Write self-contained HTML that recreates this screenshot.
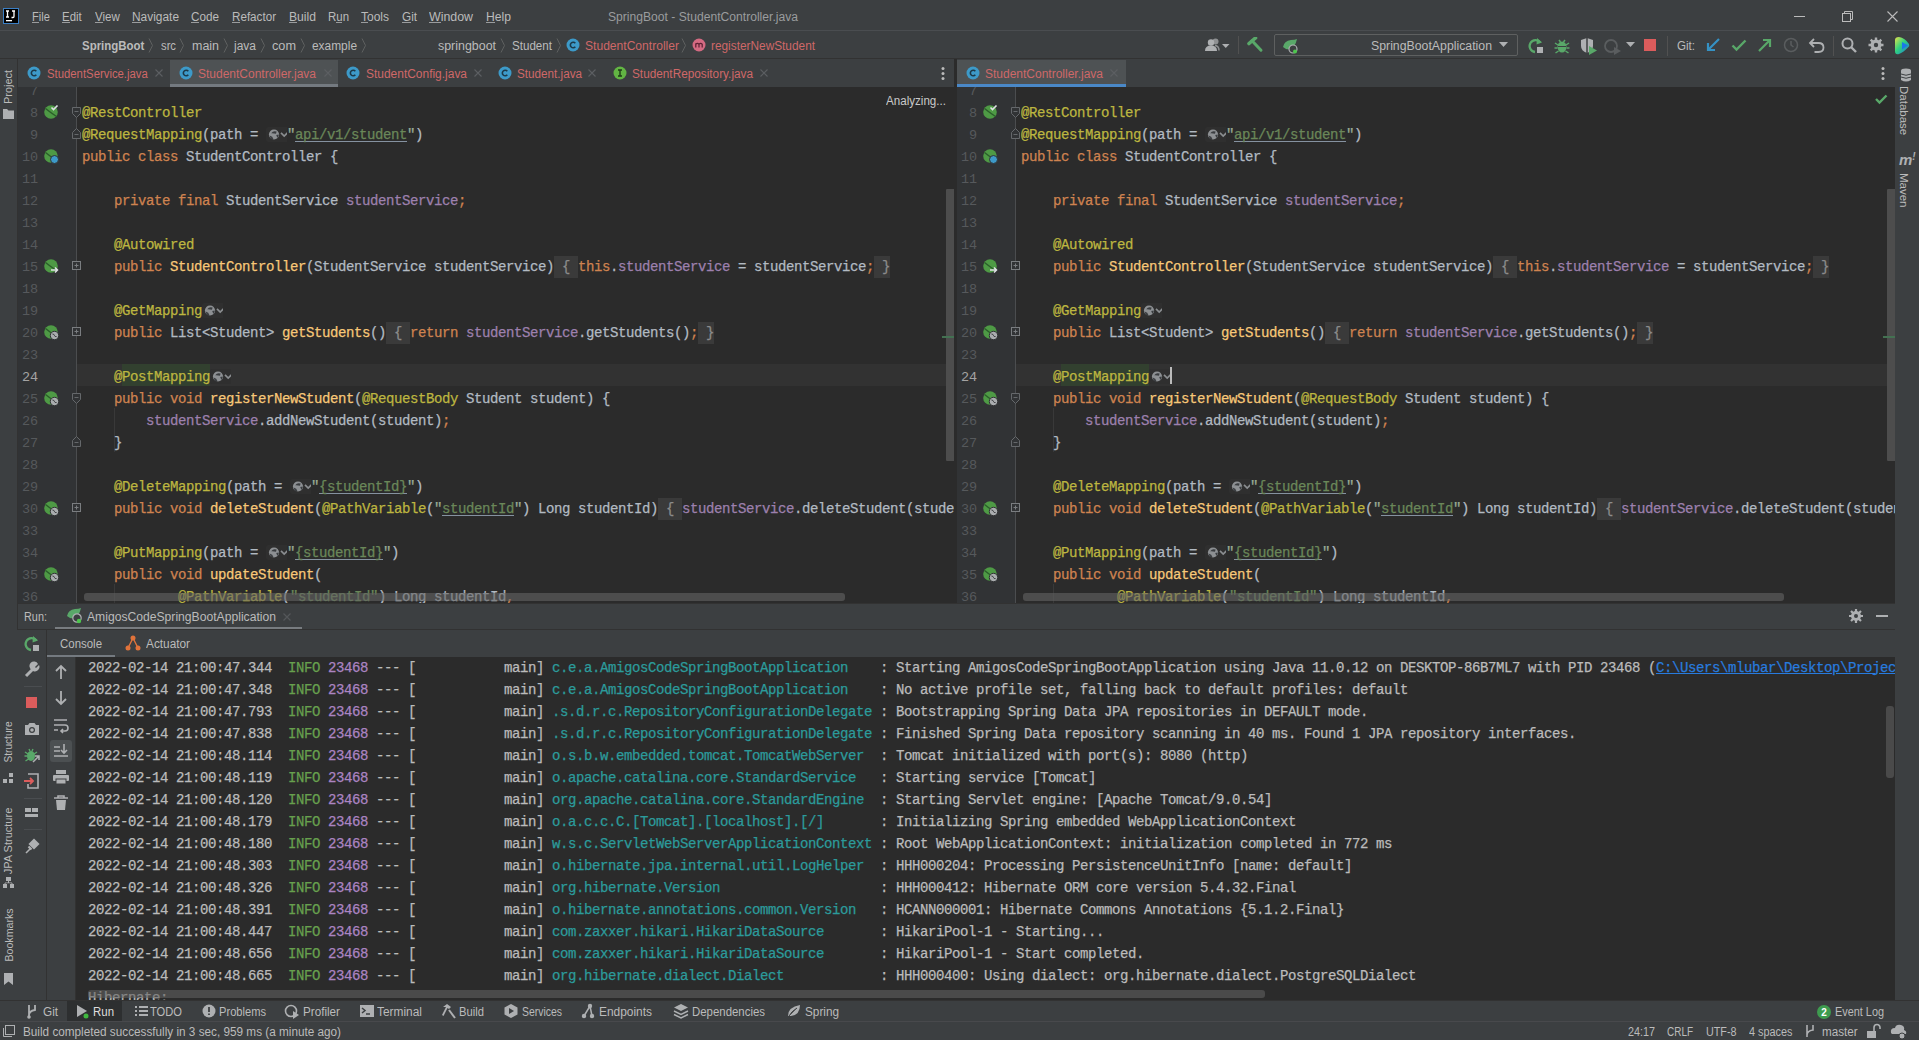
<!DOCTYPE html><html><head><meta charset="utf-8"><style>
*{margin:0;padding:0}
html,body{width:1919px;height:1040px;overflow:hidden;background:#3c3f41}
body{position:relative;font-family:"Liberation Sans",sans-serif}
.r{position:absolute;display:block}
.t{position:absolute;white-space:pre;line-height:20px;height:20px}
.ln{position:absolute;text-align:right;font-family:"Liberation Mono",monospace;font-size:13.5px;line-height:22px;height:22px;letter-spacing:-0.1px}
.cl{position:absolute;white-space:pre;overflow:hidden;font-family:"Liberation Mono",monospace;font-size:14px;letter-spacing:-0.4014px;line-height:22px;height:22px;color:#b2bac2;-webkit-text-stroke:0.25px currentColor}
.cl span{display:inline-block;height:22px;vertical-align:top}
.d{color:#b2bac2} .k{color:#cf8350} .a{color:#bdb640} .s{color:#6a8759} .q{color:#9aab94} .f{color:#9d80ae} .m{color:#f8c878}
.su{color:#6a8759;text-decoration:underline;text-decoration-color:#8592a0;text-underline-offset:2px;text-decoration-skip-ink:none}
.pm{color:#bdb640} .pmh{color:#bdb640}
.fd{background:#3a3a3a;color:#8c8c8c}
.gl{width:21px;letter-spacing:0}
.cd{color:#bbbbbb} .ci{color:#67a04e} .cp{color:#ab84c2} .cg{color:#2b9b9b} .ck{color:#287bde;text-decoration:underline}
</style></head><body><div class="r" style="left:0px;top:0px;width:1919px;height:30px;background:#3c3f41;"></div>
<div class="r" style="left:0px;top:30px;width:1919px;height:1px;background:#4a4d50;"></div>
<svg class="r" style="left:3px;top:8px;" width="16" height="16" viewBox="0 0 16 16"><rect x="0.5" y="0.5" width="15" height="15" fill="#000" stroke="#3b7fc4" stroke-width="1"/><path d="M3 3h3M4.5 3v6M3 9h3M9 3h3M11 3v5.5q0 1-1 1H8.5" stroke="#fff" stroke-width="1.3" fill="none"/><rect x="3" y="12" width="6" height="1.3" fill="#fff"/></svg>
<div class="t" style="left:31.5px;top:6.7px;font-size:12.00px;color:#bbbbbb;transform-origin:0 50%;transform:scaleX(0.9206);">File</div>
<div class="r" style="left:32px;top:22px;width:7px;height:1px;background:#9a9c9e;"></div>
<div class="t" style="left:62.3px;top:6.7px;font-size:12.00px;color:#bbbbbb;transform-origin:0 50%;transform:scaleX(0.9527);">Edit</div>
<div class="r" style="left:62px;top:22px;width:8px;height:1px;background:#9a9c9e;"></div>
<div class="t" style="left:95.2px;top:6.7px;font-size:12.00px;color:#bbbbbb;transform-origin:0 50%;transform:scaleX(0.9615);">View</div>
<div class="r" style="left:95px;top:22px;width:8px;height:1px;background:#9a9c9e;"></div>
<div class="t" style="left:132.2px;top:6.7px;font-size:12.00px;color:#bbbbbb;transform-origin:0 50%;transform:scaleX(0.9924);">Navigate</div>
<div class="r" style="left:132px;top:22px;width:9px;height:1px;background:#9a9c9e;"></div>
<div class="t" style="left:191.0px;top:6.7px;font-size:12.00px;color:#bbbbbb;transform-origin:0 50%;transform:scaleX(0.9761);">Code</div>
<div class="r" style="left:191px;top:22px;width:8px;height:1px;background:#9a9c9e;"></div>
<div class="t" style="left:232.0px;top:6.7px;font-size:12.00px;color:#bbbbbb;transform-origin:0 50%;transform:scaleX(0.9703);">Refactor</div>
<div class="r" style="left:232px;top:22px;width:8px;height:1px;background:#9a9c9e;"></div>
<div class="t" style="left:289.0px;top:6.7px;font-size:12.00px;color:#bbbbbb;transform-origin:0 50%;transform:scaleX(1.0119);">Build</div>
<div class="r" style="left:289px;top:22px;width:8px;height:1px;background:#9a9c9e;"></div>
<div class="t" style="left:328.0px;top:6.7px;font-size:12.00px;color:#bbbbbb;transform-origin:0 50%;transform:scaleX(0.9540);">Run</div>
<div class="r" style="left:336px;top:22px;width:6px;height:1px;background:#9a9c9e;"></div>
<div class="t" style="left:361.0px;top:6.7px;font-size:12.00px;color:#bbbbbb;transform-origin:0 50%;transform:scaleX(0.9996);">Tools</div>
<div class="r" style="left:361px;top:22px;width:7px;height:1px;background:#9a9c9e;"></div>
<div class="t" style="left:402.0px;top:6.7px;font-size:12.00px;color:#bbbbbb;transform-origin:0 50%;transform:scaleX(0.9782);">Git</div>
<div class="r" style="left:402px;top:22px;width:9px;height:1px;background:#9a9c9e;"></div>
<div class="t" style="left:429.0px;top:6.7px;font-size:12.00px;color:#bbbbbb;transform-origin:0 50%;transform:scaleX(1.0310);">Window</div>
<div class="r" style="left:429px;top:22px;width:12px;height:1px;background:#9a9c9e;"></div>
<div class="t" style="left:486.0px;top:6.7px;font-size:12.00px;color:#bbbbbb;transform-origin:0 50%;transform:scaleX(1.0130);">Help</div>
<div class="r" style="left:486px;top:22px;width:9px;height:1px;background:#9a9c9e;"></div>
<div class="t" style="left:608.0px;top:6.7px;font-size:12.00px;color:#9a9c9e;transform-origin:0 50%;transform:scaleX(1.0101);">SpringBoot - StudentController.java</div>
<svg class="r" style="left:1790px;top:9px;" width="20" height="14" viewBox="0 0 20 14"><path d="M4 7.5h11" stroke="#bbb" stroke-width="1"/></svg>
<svg class="r" style="left:1838px;top:8px;" width="18" height="16" viewBox="0 0 18 16"><rect x="4.5" y="5.5" width="8" height="8" fill="none" stroke="#bbb"/><path d="M6.5 5.5v-2h8v8h-2" fill="none" stroke="#bbb"/></svg>
<svg class="r" style="left:1884px;top:8px;" width="18" height="18" viewBox="0 0 18 18"><path d="M3.5 3.5l10 10M13.5 3.5l-10 10" stroke="#bbb" stroke-width="1.1"/></svg>
<div class="r" style="left:0px;top:31px;width:1919px;height:28px;background:#3c3f41;"></div>
<div class="r" style="left:0px;top:58px;width:1919px;height:1px;background:#323232;"></div>
<div class="t" style="left:81.7px;top:36.2px;font-size:12.00px;color:#bbbbbb;font-weight:bold;transform-origin:0 50%;transform:scaleX(0.9538);">SpringBoot</div>
<div class="t" style="left:161.0px;top:36.2px;font-size:12.00px;color:#bbbbbb;transform-origin:0 50%;transform:scaleX(0.9378);">src</div>
<div class="t" style="left:192.0px;top:36.2px;font-size:12.00px;color:#bbbbbb;transform-origin:0 50%;transform:scaleX(1.0381);">main</div>
<div class="t" style="left:234.0px;top:36.2px;font-size:12.00px;color:#bbbbbb;transform-origin:0 50%;transform:scaleX(0.9994);">java</div>
<div class="t" style="left:272.0px;top:36.2px;font-size:12.00px;color:#bbbbbb;transform-origin:0 50%;transform:scaleX(1.0587);">com</div>
<div class="t" style="left:312.0px;top:36.2px;font-size:12.00px;color:#bbbbbb;transform-origin:0 50%;transform:scaleX(0.9922);">example</div>
<div class="t" style="left:438.0px;top:36.2px;font-size:12.00px;color:#bbbbbb;transform-origin:0 50%;transform:scaleX(1.0351);">springboot</div>
<div class="t" style="left:512.0px;top:36.2px;font-size:12.00px;color:#bbbbbb;transform-origin:0 50%;transform:scaleX(0.9670);">Student</div>
<svg class="r" style="left:148px;top:37px;" width="6" height="17" viewBox="0 0 6 17"><path d="M1 1.5l3.5 7l-3.5 7" stroke="#5e6060" stroke-width="1" fill="none"/></svg>
<svg class="r" style="left:179px;top:37px;" width="6" height="17" viewBox="0 0 6 17"><path d="M1 1.5l3.5 7l-3.5 7" stroke="#5e6060" stroke-width="1" fill="none"/></svg>
<svg class="r" style="left:223px;top:37px;" width="6" height="17" viewBox="0 0 6 17"><path d="M1 1.5l3.5 7l-3.5 7" stroke="#5e6060" stroke-width="1" fill="none"/></svg>
<svg class="r" style="left:260px;top:37px;" width="6" height="17" viewBox="0 0 6 17"><path d="M1 1.5l3.5 7l-3.5 7" stroke="#5e6060" stroke-width="1" fill="none"/></svg>
<svg class="r" style="left:300px;top:37px;" width="6" height="17" viewBox="0 0 6 17"><path d="M1 1.5l3.5 7l-3.5 7" stroke="#5e6060" stroke-width="1" fill="none"/></svg>
<svg class="r" style="left:361px;top:37px;" width="6" height="17" viewBox="0 0 6 17"><path d="M1 1.5l3.5 7l-3.5 7" stroke="#5e6060" stroke-width="1" fill="none"/></svg>
<svg class="r" style="left:500px;top:37px;" width="6" height="17" viewBox="0 0 6 17"><path d="M1 1.5l3.5 7l-3.5 7" stroke="#5e6060" stroke-width="1" fill="none"/></svg>
<svg class="r" style="left:556px;top:37px;" width="6" height="17" viewBox="0 0 6 17"><path d="M1 1.5l3.5 7l-3.5 7" stroke="#5e6060" stroke-width="1" fill="none"/></svg>
<svg class="r" style="left:681px;top:37px;" width="6" height="17" viewBox="0 0 6 17"><path d="M1 1.5l3.5 7l-3.5 7" stroke="#5e6060" stroke-width="1" fill="none"/></svg>
<svg class="r" style="left:565px;top:37px;" width="16" height="16" viewBox="0 0 16 16"><circle cx="8" cy="8" r="6.5" fill="#3d9ac9"/><path d="M10.3 6.2a2.8 2.8 0 1 0 0 3.6" stroke="#1c3a4a" stroke-width="1.6" fill="none"/></svg>
<div class="t" style="left:585.0px;top:35.7px;font-size:12.00px;color:#cf6868;transform-origin:0 50%;transform:scaleX(1.0066);">StudentController</div>
<svg class="r" style="left:691px;top:37px;" width="16" height="16" viewBox="0 0 16 16"><circle cx="8" cy="8" r="6.5" fill="#d46a82"/><path d="M4.8 10.5v-4.2M4.8 7.2q1.6-1.5 3.2 0v3.3M8 7.2q1.6-1.5 3.2 0v3.3" stroke="#5b2032" stroke-width="1.2" fill="none"/></svg>
<div class="t" style="left:711.0px;top:35.7px;font-size:12.00px;color:#cf6868;transform-origin:0 50%;transform:scaleX(0.9869);">registerNewStudent</div>
<svg class="r" style="left:1204px;top:37px;" width="28" height="16" viewBox="0 0 28 16"><circle cx="11.5" cy="4.5" r="3" fill="#8f9193"/><circle cx="7" cy="5.5" r="3.2" fill="#aeb0b2"/><path d="M1 14q0-5.5 6-5.5q6 0 6 5.5z" fill="#aeb0b2"/><path d="M11 8.5q4 0.5 4 5" stroke="#8f9193" stroke-width="1.5" fill="none"/><path d="M18 7h7.5l-3.75 4z" fill="#aeb0b2"/></svg>
<div class="r" style="left:1238px;top:36px;width:1px;height:18px;background:#515151;"></div>
<svg class="r" style="left:1247px;top:37px;" width="17" height="17" viewBox="0 0 17 17"><path d="M2 6.5L8.5 1" stroke="#59a869" stroke-width="3.6" stroke-linecap="round"/><path d="M5 3.8l9 9.4" stroke="#59a869" stroke-width="3" stroke-linecap="round"/></svg>
<div class="r" style="left:1274px;top:34px;width:244px;height:22px;background:transparent;border:1px solid #5e6060;box-sizing:border-box;border-radius:2px;"></div>
<svg class="r" style="left:1281px;top:38px;" width="22" height="16" viewBox="0 0 22 16"><path d="M2 9q1-6 8-7q4 0 6-1q-1 5-3 7q-3 4-8 3z" fill="#59a869"/><circle cx="12" cy="11" r="4" fill="#3c3f41" stroke="#aeb0b2" stroke-width="1.2"/><circle cx="14" cy="13.5" r="2" fill="#4dc64d"/></svg>
<div class="t" style="left:1371.0px;top:36.2px;font-size:12.00px;color:#bbbbbb;transform-origin:0 50%;transform:scaleX(1.0248);">SpringBootApplication</div>
<svg class="r" style="left:1498px;top:41px;" width="12" height="8" viewBox="0 0 12 8"><path d="M1 1h9l-4.5 5z" fill="#aeb0b2"/></svg>
<svg class="r" style="left:1527px;top:37px;" width="18" height="18" viewBox="0 0 18 18"><path d="M13.5 5.5A6 6 0 1 0 8 15" stroke="#59a869" stroke-width="2.3" fill="none"/><path d="M10 1l5 4.5l-5.5 2z" fill="#59a869"/><rect x="10" y="10" width="6" height="6" fill="#aeb0b2"/></svg>
<svg class="r" style="left:1553px;top:37px;" width="18" height="18" viewBox="0 0 18 18"><ellipse cx="9" cy="10" rx="4.5" ry="5.5" fill="#59a869"/><path d="M2 6l3 2M16 6l-3 2M1.5 11h3M16.5 11h-3M2.5 16l3-2M15.5 16l-3-2M6 3l1.5 2M12 3l-1.5 2" stroke="#59a869" stroke-width="1.5"/><path d="M5 9.5h8" stroke="#3c3f41" stroke-width="1"/></svg>
<svg class="r" style="left:1579px;top:37px;" width="20" height="18" viewBox="0 0 20 18"><path d="M2 3l6-2l6 2v6q0 5-6 7q-6-2-6-7z" fill="#aeb0b2"/><path d="M8 1v15" stroke="#3c3f41" stroke-width="1.5"/><path d="M10 9l8 4.5l-8 4.5z" fill="#59a869"/></svg>
<svg class="r" style="left:1603px;top:37px;" width="20" height="18" viewBox="0 0 20 18"><circle cx="8" cy="9" r="6" stroke="#5a5d5f" stroke-width="1.8" fill="none"/><path d="M11 10l7 4l-7 4z" fill="#5a5d5f"/></svg>
<svg class="r" style="left:1625px;top:41px;" width="12" height="8" viewBox="0 0 12 8"><path d="M1 1h9l-4.5 5z" fill="#aeb0b2"/></svg>
<div class="r" style="left:1644px;top:39px;width:12px;height:12px;background:#db5c5c;"></div>
<div class="r" style="left:1667px;top:36px;width:1px;height:20px;background:#515151;"></div>
<div class="t" style="left:1677.0px;top:35.7px;font-size:12.00px;color:#bbbbbb;transform-origin:0 50%;transform:scaleX(0.9642);">Git:</div>
<svg class="r" style="left:1704px;top:36px;" width="18" height="18" viewBox="0 0 18 18"><path d="M15 3l-10 10M4 7v7h7" stroke="#3592c4" stroke-width="2.2" fill="none"/></svg>
<svg class="r" style="left:1730px;top:36px;" width="18" height="18" viewBox="0 0 18 18"><path d="M2.5 9.5l4 4l9-9" stroke="#59a869" stroke-width="2.4" fill="none"/></svg>
<svg class="r" style="left:1756px;top:36px;" width="18" height="18" viewBox="0 0 18 18"><path d="M3 15l10-10M7 4h7v7" stroke="#59a869" stroke-width="2.2" fill="none"/></svg>
<svg class="r" style="left:1782px;top:36px;" width="18" height="18" viewBox="0 0 18 18"><circle cx="9" cy="9" r="6.5" stroke="#5a5d5f" stroke-width="1.5" fill="none"/><path d="M9 5v4l2.5 2" stroke="#5a5d5f" stroke-width="1.5" fill="none"/></svg>
<svg class="r" style="left:1808px;top:36px;" width="18" height="18" viewBox="0 0 18 18"><path d="M6 3l-4 4l4 4" stroke="#aeb0b2" stroke-width="1.8" fill="none"/><path d="M2.5 7h8q5 0 5 4.5t-5 4.5h-4" stroke="#aeb0b2" stroke-width="1.8" fill="none"/></svg>
<div class="r" style="left:1833px;top:36px;width:1px;height:20px;background:#515151;"></div>
<svg class="r" style="left:1840px;top:36px;" width="18" height="18" viewBox="0 0 18 18"><circle cx="7.5" cy="7.5" r="5" stroke="#aeb0b2" stroke-width="2" fill="none"/><path d="M11 11l5 5" stroke="#aeb0b2" stroke-width="2.4"/></svg>
<svg class="r" style="left:1867px;top:36px;" width="18" height="18" viewBox="0 0 18 18"><circle cx="9" cy="9" r="5.5" fill="#aeb0b2"/><circle cx="9" cy="9" r="2.2" fill="#3c3f41"/><path d="M9 1.5v15M1.5 9h15M3.7 3.7l10.6 10.6M14.3 3.7l-10.6 10.6" stroke="#aeb0b2" stroke-width="2.4"/><circle cx="9" cy="9" r="2.2" fill="#3c3f41"/></svg>
<svg class="r" style="left:1893px;top:36px;" width="18" height="19" viewBox="0 0 18 19"><defs><linearGradient id="lg1" x1="0" y1="0" x2="1" y2="1"><stop offset="0" stop-color="#e6e24a"/><stop offset="0.45" stop-color="#2fd37f"/><stop offset="1" stop-color="#1f6fe0"/></linearGradient></defs><path d="M2 4q0-3 4-3q6 1 10 7q1 2-1 3.5q-5 5-9 6.5q-4 1-4-3z" fill="url(#lg1)"/><path d="M9 6l6 3.5l-6 4z" fill="#1b78e8"/></svg>
<div class="r" style="left:0px;top:59px;width:17px;height:941px;background:#3c3f41;"></div>
<div class="r" style="left:17px;top:59px;width:1px;height:941px;background:#323232;"></div>
<div class="t" style="left:-8.6px;top:77.0px;width:34.2px;font-size:11.0px;color:#bbbbbb;transform:rotate(-90deg) scaleX(0.9932);text-align:center">Project</div>
<svg class="r" style="left:2px;top:108px;" width="13" height="12" viewBox="0 0 13 12"><path d="M1 1h4l1.5 1.5H12V11H1z" fill="#aeb0b2"/></svg>
<div class="t" style="left:-13.8px;top:731.5px;width:44.6px;font-size:11.0px;color:#bbbbbb;transform:rotate(-90deg) scaleX(0.9188);text-align:center">Structure</div>
<svg class="r" style="left:2px;top:771px;" width="13" height="14" viewBox="0 0 13 14"><rect x="7" y="2" width="4" height="4" fill="#aeb0b2"/><rect x="1" y="8" width="4" height="4" fill="#aeb0b2"/><rect x="7" y="8" width="4" height="4" fill="#aeb0b2"/></svg>
<div class="t" style="left:-24.7px;top:831.2px;width:66.4px;font-size:11.0px;color:#bbbbbb;transform:rotate(-90deg) scaleX(1.0010);text-align:center">JPA Structure</div>
<svg class="r" style="left:2px;top:876px;" width="13" height="14" viewBox="0 0 13 14"><rect x="4" y="1" width="5" height="4" fill="#aeb0b2"/><rect x="1" y="8" width="4" height="4" fill="#aeb0b2"/><rect x="8" y="8" width="4" height="4" fill="#aeb0b2"/><path d="M6.5 5v2M3 8V7h7v1" stroke="#aeb0b2"/></svg>
<div class="t" style="left:-19.0px;top:924.5px;width:55.0px;font-size:11.0px;color:#bbbbbb;transform:rotate(-90deg) scaleX(0.9634);text-align:center">Bookmarks</div>
<svg class="r" style="left:2px;top:972px;" width="13" height="14" viewBox="0 0 13 14"><path d="M2 1h9v12l-4.5-3.5L2 13z" fill="#aeb0b2"/></svg>
<div class="r" style="left:1895px;top:59px;width:24px;height:941px;background:#3c3f41;"></div>
<svg class="r" style="left:1898px;top:67px;" width="16" height="16" viewBox="0 0 16 16"><ellipse cx="8" cy="3.5" rx="5" ry="2" fill="#aeb0b2"/><path d="M3 4v9q5 3 10 0V4" fill="#aeb0b2"/><path d="M3 7q5 2.5 10 0M3 10q5 2.5 10 0" stroke="#3c3f41" stroke-width="1" fill="none"/></svg>
<div class="t" style="left:1914px;top:86px;font-size:11.5px;color:#bbbbbb;transform-origin:0 0;transform:rotate(90deg)">Database</div>
<div class="t" style="left:1899px;top:150px;font-size:15px;color:#aeb0b2;font-weight:bold;font-style:italic">m<span style="font-size:10px;vertical-align:top;line-height:14px">!</span></div>
<div class="t" style="left:1914px;top:173px;font-size:11.5px;color:#bbbbbb;transform-origin:0 0;transform:rotate(90deg)">Maven</div>
<div class="r" style="left:18px;top:59px;width:936px;height:28px;background:#3c3f41;"></div>
<svg class="r" style="left:26px;top:65px;" width="16" height="16" viewBox="0 0 16 16"><circle cx="8" cy="8" r="6.5" fill="#3d9ac9"/><path d="M10.3 6.2a2.8 2.8 0 1 0 0 3.6" stroke="#1c3a4a" stroke-width="1.6" fill="none"/></svg>
<div class="t" style="left:46.7px;top:63.7px;font-size:12.00px;color:#cf6868;transform-origin:0 50%;transform:scaleX(0.9445);">StudentService.java</div>
<svg class="r" style="left:154px;top:68px;" width="10" height="10" viewBox="0 0 10 10"><path d="M1.5 1.5l7 7M8.5 1.5l-7 7" stroke="#5c5f62" stroke-width="1.1"/></svg>
<div class="r" style="left:170px;top:60px;width:168px;height:24px;background:#4e5254;"></div>
<div class="r" style="left:170px;top:84px;width:168px;height:3px;background:#747a80;"></div>
<svg class="r" style="left:178px;top:65px;" width="16" height="16" viewBox="0 0 16 16"><circle cx="8" cy="8" r="6.5" fill="#3d9ac9"/><path d="M10.3 6.2a2.8 2.8 0 1 0 0 3.6" stroke="#1c3a4a" stroke-width="1.6" fill="none"/></svg>
<div class="t" style="left:198.0px;top:63.7px;font-size:12.00px;color:#cf6868;transform-origin:0 50%;transform:scaleX(0.9994);">StudentController.java</div>
<svg class="r" style="left:322.5px;top:68px;" width="10" height="10" viewBox="0 0 10 10"><path d="M1.5 1.5l7 7M8.5 1.5l-7 7" stroke="#5c5f62" stroke-width="1.1"/></svg>
<svg class="r" style="left:345px;top:65px;" width="16" height="16" viewBox="0 0 16 16"><circle cx="8" cy="8" r="6.5" fill="#3d9ac9"/><path d="M10.3 6.2a2.8 2.8 0 1 0 0 3.6" stroke="#1c3a4a" stroke-width="1.6" fill="none"/></svg>
<div class="t" style="left:366.0px;top:63.7px;font-size:12.00px;color:#cf6868;transform-origin:0 50%;transform:scaleX(0.9961);">StudentConfig.java</div>
<svg class="r" style="left:473px;top:68px;" width="10" height="10" viewBox="0 0 10 10"><path d="M1.5 1.5l7 7M8.5 1.5l-7 7" stroke="#5c5f62" stroke-width="1.1"/></svg>
<svg class="r" style="left:497px;top:65px;" width="16" height="16" viewBox="0 0 16 16"><circle cx="8" cy="8" r="6.5" fill="#3d9ac9"/><path d="M10.3 6.2a2.8 2.8 0 1 0 0 3.6" stroke="#1c3a4a" stroke-width="1.6" fill="none"/></svg>
<div class="t" style="left:517.0px;top:63.7px;font-size:12.00px;color:#cf6868;transform-origin:0 50%;transform:scaleX(0.9744);">Student.java</div>
<svg class="r" style="left:587px;top:68px;" width="10" height="10" viewBox="0 0 10 10"><path d="M1.5 1.5l7 7M8.5 1.5l-7 7" stroke="#5c5f62" stroke-width="1.1"/></svg>
<svg class="r" style="left:612px;top:65px;" width="16" height="16" viewBox="0 0 16 16"><circle cx="8" cy="8" r="6.5" fill="#62b543"/><path d="M6 5h4M8 5v6M6 11h4" stroke="#1f3d17" stroke-width="1.4"/></svg>
<div class="t" style="left:632.0px;top:63.7px;font-size:12.00px;color:#cf6868;transform-origin:0 50%;transform:scaleX(0.9823);">StudentRepository.java</div>
<svg class="r" style="left:759px;top:68px;" width="10" height="10" viewBox="0 0 10 10"><path d="M1.5 1.5l7 7M8.5 1.5l-7 7" stroke="#5c5f62" stroke-width="1.1"/></svg>
<svg class="r" style="left:940px;top:66px;" width="6" height="16" viewBox="0 0 6 16"><circle cx="3" cy="2.5" r="1.5" fill="#bbb"/><circle cx="3" cy="7.5" r="1.5" fill="#bbb"/><circle cx="3" cy="12.5" r="1.5" fill="#bbb"/></svg>
<div class="r" style="left:954px;top:59px;width:3px;height:544px;background:#2b2b2b;"></div>
<div class="r" style="left:957px;top:59px;width:938px;height:28px;background:#3c3f41;"></div>
<div class="r" style="left:957px;top:60px;width:169px;height:24px;background:#4e5254;"></div>
<div class="r" style="left:957px;top:84px;width:169px;height:3px;background:#4a88c7;"></div>
<svg class="r" style="left:965px;top:65px;" width="16" height="16" viewBox="0 0 16 16"><circle cx="8" cy="8" r="6.5" fill="#3d9ac9"/><path d="M10.3 6.2a2.8 2.8 0 1 0 0 3.6" stroke="#1c3a4a" stroke-width="1.6" fill="none"/></svg>
<div class="t" style="left:985.0px;top:63.7px;font-size:12.00px;color:#cf6868;transform-origin:0 50%;transform:scaleX(0.9994);">StudentController.java</div>
<svg class="r" style="left:1109px;top:68px;" width="10" height="10" viewBox="0 0 10 10"><path d="M1.5 1.5l7 7M8.5 1.5l-7 7" stroke="#5c5f62" stroke-width="1.1"/></svg>
<svg class="r" style="left:1880px;top:66px;" width="6" height="16" viewBox="0 0 6 16"><circle cx="3" cy="2.5" r="1.5" fill="#bbb"/><circle cx="3" cy="7.5" r="1.5" fill="#bbb"/><circle cx="3" cy="12.5" r="1.5" fill="#bbb"/></svg>
<div class="r" style="left:0;top:0;width:1919px;height:1040px;clip-path:inset(87px 965px 437px 18px)">
<div class="r" style="left:18px;top:87px;width:936px;height:516px;background:#2b2b2b;"></div>
<div class="r" style="left:18px;top:87px;width:58px;height:516px;background:#313335;"></div>
<div class="r" style="left:77px;top:364px;width:877px;height:22px;background:#323232;"></div>
<div class="r" style="left:76px;top:87px;width:1px;height:516px;background:#4b4d4f;"></div>
<div class="r" style="left:122px;top:364px;width:88px;height:22px;background:#32402f;"></div>
<div class="r" style="left:114px;top:408px;width:1px;height:44px;background:#393939;"></div>
<div class="r" style="left:114px;top:584px;width:1px;height:22px;background:#393939;"></div>
<div class="ln" style="left:18px;top:80.5px;width:20px;color:#56595c">7</div>
<div class="ln" style="left:18px;top:102.5px;width:20px;color:#56595c">8</div>
<svg class="r" style="left:43px;top:104px;" width="17" height="17" viewBox="0 0 17 17"><circle cx="8" cy="8" r="6.8" fill="#4e9a45"/><path d="M2.5 4.5q5 4 11 8" stroke="#2b5e2a" stroke-width="1.4" fill="none"/><path d="M8.5 3.5l2 2l4-4" stroke="#dfe1e5" stroke-width="1.6" fill="none"/></svg>
<svg class="r" style="left:71px;top:107px;" width="11" height="13" viewBox="0 0 11 13"><path d="M1.5 0.5h8v6l-4 4l-4-4z" fill="#313335" stroke="#65686b" stroke-width="1"/><path d="M3.5 4.5h4" stroke="#65686b"/></svg>
<div class="cl" style="left:82px;top:101.5px;width:872px"><span class="a">@RestController</span></div>
<div class="ln" style="left:18px;top:124.5px;width:20px;color:#56595c">9</div>
<svg class="r" style="left:71px;top:127px;" width="11" height="13" viewBox="0 0 11 13"><path d="M1.5 11.5h8v-6l-4-4l-4 4z" fill="#313335" stroke="#65686b" stroke-width="1"/><path d="M3.5 7.5h4" stroke="#65686b"/></svg>
<div class="cl" style="left:82px;top:123.5px;width:872px"><span class="a">@RequestMapping</span><span class="d">(path = </span><span class="gl"><svg width="21" height="22" viewBox="0 0 21 22"><rect x="0" y="3" width="23" height="15" rx="2" fill="#2f2f2f"/><circle cx="8" cy="10.5" r="5.1" fill="#8d9093"/><path d="M5.2 9.2q2-2.8 5.4-1.6l-0.6 2.2q-2.4-0.8-4.8-0.6z" fill="#3a3d40"/><path d="M3.6 11.5l2.6 1.2l1.2 2.4l-1.6 0.3q-1.8-1.4-2.2-3.9z" fill="#3a3d40"/><path d="M10.2 11l2.6-0.4q0 2-1.4 3.4z" fill="#3a3d40"/><path d="M15 8.8l3.2 3.2l3.2-3.2" stroke="#8a8d90" stroke-width="1.7" fill="none"/></svg></span><span class="q">&quot;</span><span class="su">api/v1/student</span><span class="q">&quot;</span><span class="d">)</span></div>
<div class="ln" style="left:18px;top:146.5px;width:20px;color:#56595c">10</div>
<svg class="r" style="left:43px;top:148px;" width="17" height="17" viewBox="0 0 17 17"><circle cx="8" cy="8" r="6.8" fill="#4e9a45"/><path d="M2.5 4.5q5 4 11 8" stroke="#2b5e2a" stroke-width="1.4" fill="none"/><circle cx="11.5" cy="11.5" r="4" fill="#3d9ac9" stroke="#313335" stroke-width="1"/></svg>
<div class="cl" style="left:82px;top:145.5px;width:872px"><span class="k">public class </span><span class="d">StudentController {</span></div>
<div class="ln" style="left:18px;top:168.5px;width:20px;color:#56595c">11</div>
<div class="ln" style="left:18px;top:190.5px;width:20px;color:#56595c">12</div>
<div class="cl" style="left:82px;top:189.5px;width:872px"><span class="d">    </span><span class="k">private final </span><span class="d">StudentService </span><span class="f">studentService</span><span class="k">;</span></div>
<div class="ln" style="left:18px;top:212.5px;width:20px;color:#56595c">13</div>
<div class="ln" style="left:18px;top:234.5px;width:20px;color:#56595c">14</div>
<div class="cl" style="left:82px;top:233.5px;width:872px"><span class="d">    </span><span class="a">@Autowired</span></div>
<div class="ln" style="left:18px;top:256.5px;width:20px;color:#56595c">15</div>
<svg class="r" style="left:43px;top:258px;" width="17" height="17" viewBox="0 0 17 17"><circle cx="8" cy="8" r="6.8" fill="#4e9a45"/><path d="M2.5 4.5q5 4 11 8" stroke="#2b5e2a" stroke-width="1.4" fill="none"/><path d="M8 12h6M12 9.5l2.5 2.5l-2.5 2.5" stroke="#dfe1e5" stroke-width="1.5" fill="none"/></svg>
<svg class="r" style="left:71px;top:260px;" width="11" height="11" viewBox="0 0 11 11"><rect x="1.5" y="1.5" width="8" height="8" fill="#313335" stroke="#7a7d80" stroke-width="1"/><path d="M3.5 5.5h4M5.5 3.5v4" stroke="#7a7d80"/></svg>
<div class="cl" style="left:82px;top:255.5px;width:872px"><span class="d">    </span><span class="k">public </span><span class="m">StudentController</span><span class="d">(StudentService studentService)</span><span class="fd"> { </span><span class="k">this</span><span class="d">.</span><span class="f">studentService</span><span class="d"> = studentService</span><span class="k">;</span><span class="fd"> }</span></div>
<div class="ln" style="left:18px;top:278.5px;width:20px;color:#56595c">18</div>
<div class="ln" style="left:18px;top:300.5px;width:20px;color:#56595c">19</div>
<div class="cl" style="left:82px;top:299.5px;width:872px"><span class="d">    </span><span class="a">@GetMapping</span><span class="gl"><svg width="21" height="22" viewBox="0 0 21 22"><rect x="0" y="3" width="23" height="15" rx="2" fill="#2f2f2f"/><circle cx="8" cy="10.5" r="5.1" fill="#8d9093"/><path d="M5.2 9.2q2-2.8 5.4-1.6l-0.6 2.2q-2.4-0.8-4.8-0.6z" fill="#3a3d40"/><path d="M3.6 11.5l2.6 1.2l1.2 2.4l-1.6 0.3q-1.8-1.4-2.2-3.9z" fill="#3a3d40"/><path d="M10.2 11l2.6-0.4q0 2-1.4 3.4z" fill="#3a3d40"/><path d="M15 8.8l3.2 3.2l3.2-3.2" stroke="#8a8d90" stroke-width="1.7" fill="none"/></svg></span></div>
<div class="ln" style="left:18px;top:322.5px;width:20px;color:#56595c">20</div>
<svg class="r" style="left:43px;top:324px;" width="17" height="17" viewBox="0 0 17 17"><circle cx="8" cy="8" r="6.8" fill="#4e9a45"/><path d="M2.5 4.5q5 4 11 8" stroke="#2b5e2a" stroke-width="1.4" fill="none"/><circle cx="11.5" cy="11.5" r="4.2" fill="#a9acae" stroke="#313335" stroke-width="1"/><path d="M9.5 10q1.5 0 2 1.5t2 1" stroke="#313335" stroke-width="1" fill="none"/></svg>
<svg class="r" style="left:71px;top:326px;" width="11" height="11" viewBox="0 0 11 11"><rect x="1.5" y="1.5" width="8" height="8" fill="#313335" stroke="#7a7d80" stroke-width="1"/><path d="M3.5 5.5h4M5.5 3.5v4" stroke="#7a7d80"/></svg>
<div class="cl" style="left:82px;top:321.5px;width:872px"><span class="d">    </span><span class="k">public </span><span class="d">List&lt;Student&gt; </span><span class="m">getStudents</span><span class="d">()</span><span class="fd"> { </span><span class="k">return </span><span class="f">studentService</span><span class="d">.getStudents()</span><span class="k">;</span><span class="fd"> }</span></div>
<div class="ln" style="left:18px;top:344.5px;width:20px;color:#56595c">23</div>
<div class="ln" style="left:18px;top:366.5px;width:20px;color:#a4a3a3">24</div>
<div class="cl" style="left:82px;top:365.5px;width:872px"><span class="d">    </span><span class="pm">@</span><span class="pmh">PostMapping</span><span class="gl"><svg width="21" height="22" viewBox="0 0 21 22"><rect x="0" y="3" width="23" height="15" rx="2" fill="#2f2f2f"/><circle cx="8" cy="10.5" r="5.1" fill="#8d9093"/><path d="M5.2 9.2q2-2.8 5.4-1.6l-0.6 2.2q-2.4-0.8-4.8-0.6z" fill="#3a3d40"/><path d="M3.6 11.5l2.6 1.2l1.2 2.4l-1.6 0.3q-1.8-1.4-2.2-3.9z" fill="#3a3d40"/><path d="M10.2 11l2.6-0.4q0 2-1.4 3.4z" fill="#3a3d40"/><path d="M15 8.8l3.2 3.2l3.2-3.2" stroke="#8a8d90" stroke-width="1.7" fill="none"/></svg></span></div>
<div class="ln" style="left:18px;top:388.5px;width:20px;color:#56595c">25</div>
<svg class="r" style="left:43px;top:390px;" width="17" height="17" viewBox="0 0 17 17"><circle cx="8" cy="8" r="6.8" fill="#4e9a45"/><path d="M2.5 4.5q5 4 11 8" stroke="#2b5e2a" stroke-width="1.4" fill="none"/><circle cx="11.5" cy="11.5" r="4.2" fill="#a9acae" stroke="#313335" stroke-width="1"/><path d="M9.5 10q1.5 0 2 1.5t2 1" stroke="#313335" stroke-width="1" fill="none"/></svg>
<svg class="r" style="left:71px;top:393px;" width="11" height="13" viewBox="0 0 11 13"><path d="M1.5 0.5h8v6l-4 4l-4-4z" fill="#313335" stroke="#65686b" stroke-width="1"/><path d="M3.5 4.5h4" stroke="#65686b"/></svg>
<div class="cl" style="left:82px;top:387.5px;width:872px"><span class="d">    </span><span class="k">public void </span><span class="m">registerNewStudent</span><span class="d">(</span><span class="a">@RequestBody </span><span class="d">Student student) {</span></div>
<div class="ln" style="left:18px;top:410.5px;width:20px;color:#56595c">26</div>
<div class="cl" style="left:82px;top:409.5px;width:872px"><span class="d">        </span><span class="f">studentService</span><span class="d">.addNewStudent(student)</span><span class="k">;</span></div>
<div class="ln" style="left:18px;top:432.5px;width:20px;color:#56595c">27</div>
<svg class="r" style="left:71px;top:435px;" width="11" height="13" viewBox="0 0 11 13"><path d="M1.5 11.5h8v-6l-4-4l-4 4z" fill="#313335" stroke="#65686b" stroke-width="1"/><path d="M3.5 7.5h4" stroke="#65686b"/></svg>
<div class="cl" style="left:82px;top:431.5px;width:872px"><span class="d">    }</span></div>
<div class="ln" style="left:18px;top:454.5px;width:20px;color:#56595c">28</div>
<div class="ln" style="left:18px;top:476.5px;width:20px;color:#56595c">29</div>
<div class="cl" style="left:82px;top:475.5px;width:872px"><span class="d">    </span><span class="a">@DeleteMapping</span><span class="d">(path = </span><span class="gl"><svg width="21" height="22" viewBox="0 0 21 22"><rect x="0" y="3" width="23" height="15" rx="2" fill="#2f2f2f"/><circle cx="8" cy="10.5" r="5.1" fill="#8d9093"/><path d="M5.2 9.2q2-2.8 5.4-1.6l-0.6 2.2q-2.4-0.8-4.8-0.6z" fill="#3a3d40"/><path d="M3.6 11.5l2.6 1.2l1.2 2.4l-1.6 0.3q-1.8-1.4-2.2-3.9z" fill="#3a3d40"/><path d="M10.2 11l2.6-0.4q0 2-1.4 3.4z" fill="#3a3d40"/><path d="M15 8.8l3.2 3.2l3.2-3.2" stroke="#8a8d90" stroke-width="1.7" fill="none"/></svg></span><span class="q">&quot;</span><span class="su">{studentId}</span><span class="q">&quot;</span><span class="d">)</span></div>
<div class="ln" style="left:18px;top:498.5px;width:20px;color:#56595c">30</div>
<svg class="r" style="left:43px;top:500px;" width="17" height="17" viewBox="0 0 17 17"><circle cx="8" cy="8" r="6.8" fill="#4e9a45"/><path d="M2.5 4.5q5 4 11 8" stroke="#2b5e2a" stroke-width="1.4" fill="none"/><circle cx="11.5" cy="11.5" r="4.2" fill="#a9acae" stroke="#313335" stroke-width="1"/><path d="M9.5 10q1.5 0 2 1.5t2 1" stroke="#313335" stroke-width="1" fill="none"/></svg>
<svg class="r" style="left:71px;top:502px;" width="11" height="11" viewBox="0 0 11 11"><rect x="1.5" y="1.5" width="8" height="8" fill="#313335" stroke="#7a7d80" stroke-width="1"/><path d="M3.5 5.5h4M5.5 3.5v4" stroke="#7a7d80"/></svg>
<div class="cl" style="left:82px;top:497.5px;width:872px"><span class="d">    </span><span class="k">public void </span><span class="m">deleteStudent</span><span class="d">(</span><span class="a">@PathVariable</span><span class="d">(</span><span class="q">&quot;</span><span class="su">studentId</span><span class="q">&quot;</span><span class="d">) Long studentId)</span><span class="fd"> { </span><span class="f">studentService</span><span class="d">.deleteStudent(studentId)</span><span class="k">;</span><span class="fd"> }</span></div>
<div class="ln" style="left:18px;top:520.5px;width:20px;color:#56595c">33</div>
<div class="ln" style="left:18px;top:542.5px;width:20px;color:#56595c">34</div>
<div class="cl" style="left:82px;top:541.5px;width:872px"><span class="d">    </span><span class="a">@PutMapping</span><span class="d">(path = </span><span class="gl"><svg width="21" height="22" viewBox="0 0 21 22"><rect x="0" y="3" width="23" height="15" rx="2" fill="#2f2f2f"/><circle cx="8" cy="10.5" r="5.1" fill="#8d9093"/><path d="M5.2 9.2q2-2.8 5.4-1.6l-0.6 2.2q-2.4-0.8-4.8-0.6z" fill="#3a3d40"/><path d="M3.6 11.5l2.6 1.2l1.2 2.4l-1.6 0.3q-1.8-1.4-2.2-3.9z" fill="#3a3d40"/><path d="M10.2 11l2.6-0.4q0 2-1.4 3.4z" fill="#3a3d40"/><path d="M15 8.8l3.2 3.2l3.2-3.2" stroke="#8a8d90" stroke-width="1.7" fill="none"/></svg></span><span class="q">&quot;</span><span class="su">{studentId}</span><span class="q">&quot;</span><span class="d">)</span></div>
<div class="ln" style="left:18px;top:564.5px;width:20px;color:#56595c">35</div>
<svg class="r" style="left:43px;top:566px;" width="17" height="17" viewBox="0 0 17 17"><circle cx="8" cy="8" r="6.8" fill="#4e9a45"/><path d="M2.5 4.5q5 4 11 8" stroke="#2b5e2a" stroke-width="1.4" fill="none"/><circle cx="11.5" cy="11.5" r="4.2" fill="#a9acae" stroke="#313335" stroke-width="1"/><path d="M9.5 10q1.5 0 2 1.5t2 1" stroke="#313335" stroke-width="1" fill="none"/></svg>
<div class="cl" style="left:82px;top:563.5px;width:872px"><span class="d">    </span><span class="k">public void </span><span class="m">updateStudent</span><span class="d">(</span></div>
<div class="ln" style="left:18px;top:586.5px;width:20px;color:#56595c">36</div>
<div class="cl" style="left:82px;top:585.5px;width:872px"><span class="d">            </span><span class="a">@PathVariable</span><span class="d">(</span><span class="s">&quot;studentId&quot;</span><span class="d">) Long studentId</span><span class="k">,</span></div>
<div class="r" style="left:946px;top:189px;width:9px;height:272px;background:#4d4d4d;border-radius:1px"></div>
<div class="r" style="left:84px;top:593px;width:761px;height:8px;background:rgba(100,100,100,0.6);border-radius:3px"></div>
<div class="r" style="left:942px;top:336px;width:12px;height:2px;background:#447152;"></div>
</div>
<div class="r" style="left:0;top:0;width:1919px;height:1040px;clip-path:inset(87px 24px 437px 957px)">
<div class="r" style="left:957px;top:87px;width:938px;height:516px;background:#2b2b2b;"></div>
<div class="r" style="left:957px;top:87px;width:58px;height:516px;background:#313335;"></div>
<div class="r" style="left:1016px;top:364px;width:879px;height:22px;background:#323232;"></div>
<div class="r" style="left:1015px;top:87px;width:1px;height:516px;background:#4b4d4f;"></div>
<div class="r" style="left:1061px;top:364px;width:88px;height:22px;background:#32402f;"></div>
<div class="r" style="left:1053px;top:408px;width:1px;height:44px;background:#393939;"></div>
<div class="r" style="left:1053px;top:584px;width:1px;height:22px;background:#393939;"></div>
<div class="ln" style="left:957px;top:80.5px;width:20px;color:#56595c">7</div>
<div class="ln" style="left:957px;top:102.5px;width:20px;color:#56595c">8</div>
<svg class="r" style="left:982px;top:104px;" width="17" height="17" viewBox="0 0 17 17"><circle cx="8" cy="8" r="6.8" fill="#4e9a45"/><path d="M2.5 4.5q5 4 11 8" stroke="#2b5e2a" stroke-width="1.4" fill="none"/><path d="M8.5 3.5l2 2l4-4" stroke="#dfe1e5" stroke-width="1.6" fill="none"/></svg>
<svg class="r" style="left:1010px;top:107px;" width="11" height="13" viewBox="0 0 11 13"><path d="M1.5 0.5h8v6l-4 4l-4-4z" fill="#313335" stroke="#65686b" stroke-width="1"/><path d="M3.5 4.5h4" stroke="#65686b"/></svg>
<div class="cl" style="left:1021px;top:101.5px;width:874px"><span class="a">@RestController</span></div>
<div class="ln" style="left:957px;top:124.5px;width:20px;color:#56595c">9</div>
<svg class="r" style="left:1010px;top:127px;" width="11" height="13" viewBox="0 0 11 13"><path d="M1.5 11.5h8v-6l-4-4l-4 4z" fill="#313335" stroke="#65686b" stroke-width="1"/><path d="M3.5 7.5h4" stroke="#65686b"/></svg>
<div class="cl" style="left:1021px;top:123.5px;width:874px"><span class="a">@RequestMapping</span><span class="d">(path = </span><span class="gl"><svg width="21" height="22" viewBox="0 0 21 22"><rect x="0" y="3" width="23" height="15" rx="2" fill="#2f2f2f"/><circle cx="8" cy="10.5" r="5.1" fill="#8d9093"/><path d="M5.2 9.2q2-2.8 5.4-1.6l-0.6 2.2q-2.4-0.8-4.8-0.6z" fill="#3a3d40"/><path d="M3.6 11.5l2.6 1.2l1.2 2.4l-1.6 0.3q-1.8-1.4-2.2-3.9z" fill="#3a3d40"/><path d="M10.2 11l2.6-0.4q0 2-1.4 3.4z" fill="#3a3d40"/><path d="M15 8.8l3.2 3.2l3.2-3.2" stroke="#8a8d90" stroke-width="1.7" fill="none"/></svg></span><span class="q">&quot;</span><span class="su">api/v1/student</span><span class="q">&quot;</span><span class="d">)</span></div>
<div class="ln" style="left:957px;top:146.5px;width:20px;color:#56595c">10</div>
<svg class="r" style="left:982px;top:148px;" width="17" height="17" viewBox="0 0 17 17"><circle cx="8" cy="8" r="6.8" fill="#4e9a45"/><path d="M2.5 4.5q5 4 11 8" stroke="#2b5e2a" stroke-width="1.4" fill="none"/><circle cx="11.5" cy="11.5" r="4" fill="#3d9ac9" stroke="#313335" stroke-width="1"/></svg>
<div class="cl" style="left:1021px;top:145.5px;width:874px"><span class="k">public class </span><span class="d">StudentController {</span></div>
<div class="ln" style="left:957px;top:168.5px;width:20px;color:#56595c">11</div>
<div class="ln" style="left:957px;top:190.5px;width:20px;color:#56595c">12</div>
<div class="cl" style="left:1021px;top:189.5px;width:874px"><span class="d">    </span><span class="k">private final </span><span class="d">StudentService </span><span class="f">studentService</span><span class="k">;</span></div>
<div class="ln" style="left:957px;top:212.5px;width:20px;color:#56595c">13</div>
<div class="ln" style="left:957px;top:234.5px;width:20px;color:#56595c">14</div>
<div class="cl" style="left:1021px;top:233.5px;width:874px"><span class="d">    </span><span class="a">@Autowired</span></div>
<div class="ln" style="left:957px;top:256.5px;width:20px;color:#56595c">15</div>
<svg class="r" style="left:982px;top:258px;" width="17" height="17" viewBox="0 0 17 17"><circle cx="8" cy="8" r="6.8" fill="#4e9a45"/><path d="M2.5 4.5q5 4 11 8" stroke="#2b5e2a" stroke-width="1.4" fill="none"/><path d="M8 12h6M12 9.5l2.5 2.5l-2.5 2.5" stroke="#dfe1e5" stroke-width="1.5" fill="none"/></svg>
<svg class="r" style="left:1010px;top:260px;" width="11" height="11" viewBox="0 0 11 11"><rect x="1.5" y="1.5" width="8" height="8" fill="#313335" stroke="#7a7d80" stroke-width="1"/><path d="M3.5 5.5h4M5.5 3.5v4" stroke="#7a7d80"/></svg>
<div class="cl" style="left:1021px;top:255.5px;width:874px"><span class="d">    </span><span class="k">public </span><span class="m">StudentController</span><span class="d">(StudentService studentService)</span><span class="fd"> { </span><span class="k">this</span><span class="d">.</span><span class="f">studentService</span><span class="d"> = studentService</span><span class="k">;</span><span class="fd"> }</span></div>
<div class="ln" style="left:957px;top:278.5px;width:20px;color:#56595c">18</div>
<div class="ln" style="left:957px;top:300.5px;width:20px;color:#56595c">19</div>
<div class="cl" style="left:1021px;top:299.5px;width:874px"><span class="d">    </span><span class="a">@GetMapping</span><span class="gl"><svg width="21" height="22" viewBox="0 0 21 22"><rect x="0" y="3" width="23" height="15" rx="2" fill="#2f2f2f"/><circle cx="8" cy="10.5" r="5.1" fill="#8d9093"/><path d="M5.2 9.2q2-2.8 5.4-1.6l-0.6 2.2q-2.4-0.8-4.8-0.6z" fill="#3a3d40"/><path d="M3.6 11.5l2.6 1.2l1.2 2.4l-1.6 0.3q-1.8-1.4-2.2-3.9z" fill="#3a3d40"/><path d="M10.2 11l2.6-0.4q0 2-1.4 3.4z" fill="#3a3d40"/><path d="M15 8.8l3.2 3.2l3.2-3.2" stroke="#8a8d90" stroke-width="1.7" fill="none"/></svg></span></div>
<div class="ln" style="left:957px;top:322.5px;width:20px;color:#56595c">20</div>
<svg class="r" style="left:982px;top:324px;" width="17" height="17" viewBox="0 0 17 17"><circle cx="8" cy="8" r="6.8" fill="#4e9a45"/><path d="M2.5 4.5q5 4 11 8" stroke="#2b5e2a" stroke-width="1.4" fill="none"/><circle cx="11.5" cy="11.5" r="4.2" fill="#a9acae" stroke="#313335" stroke-width="1"/><path d="M9.5 10q1.5 0 2 1.5t2 1" stroke="#313335" stroke-width="1" fill="none"/></svg>
<svg class="r" style="left:1010px;top:326px;" width="11" height="11" viewBox="0 0 11 11"><rect x="1.5" y="1.5" width="8" height="8" fill="#313335" stroke="#7a7d80" stroke-width="1"/><path d="M3.5 5.5h4M5.5 3.5v4" stroke="#7a7d80"/></svg>
<div class="cl" style="left:1021px;top:321.5px;width:874px"><span class="d">    </span><span class="k">public </span><span class="d">List&lt;Student&gt; </span><span class="m">getStudents</span><span class="d">()</span><span class="fd"> { </span><span class="k">return </span><span class="f">studentService</span><span class="d">.getStudents()</span><span class="k">;</span><span class="fd"> }</span></div>
<div class="ln" style="left:957px;top:344.5px;width:20px;color:#56595c">23</div>
<div class="ln" style="left:957px;top:366.5px;width:20px;color:#a4a3a3">24</div>
<div class="cl" style="left:1021px;top:365.5px;width:874px"><span class="d">    </span><span class="pm">@</span><span class="pmh">PostMapping</span><span class="gl"><svg width="21" height="22" viewBox="0 0 21 22"><rect x="0" y="3" width="23" height="15" rx="2" fill="#2f2f2f"/><circle cx="8" cy="10.5" r="5.1" fill="#8d9093"/><path d="M5.2 9.2q2-2.8 5.4-1.6l-0.6 2.2q-2.4-0.8-4.8-0.6z" fill="#3a3d40"/><path d="M3.6 11.5l2.6 1.2l1.2 2.4l-1.6 0.3q-1.8-1.4-2.2-3.9z" fill="#3a3d40"/><path d="M10.2 11l2.6-0.4q0 2-1.4 3.4z" fill="#3a3d40"/><path d="M15 8.8l3.2 3.2l3.2-3.2" stroke="#8a8d90" stroke-width="1.7" fill="none"/></svg></span></div>
<div class="ln" style="left:957px;top:388.5px;width:20px;color:#56595c">25</div>
<svg class="r" style="left:982px;top:390px;" width="17" height="17" viewBox="0 0 17 17"><circle cx="8" cy="8" r="6.8" fill="#4e9a45"/><path d="M2.5 4.5q5 4 11 8" stroke="#2b5e2a" stroke-width="1.4" fill="none"/><circle cx="11.5" cy="11.5" r="4.2" fill="#a9acae" stroke="#313335" stroke-width="1"/><path d="M9.5 10q1.5 0 2 1.5t2 1" stroke="#313335" stroke-width="1" fill="none"/></svg>
<svg class="r" style="left:1010px;top:393px;" width="11" height="13" viewBox="0 0 11 13"><path d="M1.5 0.5h8v6l-4 4l-4-4z" fill="#313335" stroke="#65686b" stroke-width="1"/><path d="M3.5 4.5h4" stroke="#65686b"/></svg>
<div class="cl" style="left:1021px;top:387.5px;width:874px"><span class="d">    </span><span class="k">public void </span><span class="m">registerNewStudent</span><span class="d">(</span><span class="a">@RequestBody </span><span class="d">Student student) {</span></div>
<div class="ln" style="left:957px;top:410.5px;width:20px;color:#56595c">26</div>
<div class="cl" style="left:1021px;top:409.5px;width:874px"><span class="d">        </span><span class="f">studentService</span><span class="d">.addNewStudent(student)</span><span class="k">;</span></div>
<div class="ln" style="left:957px;top:432.5px;width:20px;color:#56595c">27</div>
<svg class="r" style="left:1010px;top:435px;" width="11" height="13" viewBox="0 0 11 13"><path d="M1.5 11.5h8v-6l-4-4l-4 4z" fill="#313335" stroke="#65686b" stroke-width="1"/><path d="M3.5 7.5h4" stroke="#65686b"/></svg>
<div class="cl" style="left:1021px;top:431.5px;width:874px"><span class="d">    }</span></div>
<div class="ln" style="left:957px;top:454.5px;width:20px;color:#56595c">28</div>
<div class="ln" style="left:957px;top:476.5px;width:20px;color:#56595c">29</div>
<div class="cl" style="left:1021px;top:475.5px;width:874px"><span class="d">    </span><span class="a">@DeleteMapping</span><span class="d">(path = </span><span class="gl"><svg width="21" height="22" viewBox="0 0 21 22"><rect x="0" y="3" width="23" height="15" rx="2" fill="#2f2f2f"/><circle cx="8" cy="10.5" r="5.1" fill="#8d9093"/><path d="M5.2 9.2q2-2.8 5.4-1.6l-0.6 2.2q-2.4-0.8-4.8-0.6z" fill="#3a3d40"/><path d="M3.6 11.5l2.6 1.2l1.2 2.4l-1.6 0.3q-1.8-1.4-2.2-3.9z" fill="#3a3d40"/><path d="M10.2 11l2.6-0.4q0 2-1.4 3.4z" fill="#3a3d40"/><path d="M15 8.8l3.2 3.2l3.2-3.2" stroke="#8a8d90" stroke-width="1.7" fill="none"/></svg></span><span class="q">&quot;</span><span class="su">{studentId}</span><span class="q">&quot;</span><span class="d">)</span></div>
<div class="ln" style="left:957px;top:498.5px;width:20px;color:#56595c">30</div>
<svg class="r" style="left:982px;top:500px;" width="17" height="17" viewBox="0 0 17 17"><circle cx="8" cy="8" r="6.8" fill="#4e9a45"/><path d="M2.5 4.5q5 4 11 8" stroke="#2b5e2a" stroke-width="1.4" fill="none"/><circle cx="11.5" cy="11.5" r="4.2" fill="#a9acae" stroke="#313335" stroke-width="1"/><path d="M9.5 10q1.5 0 2 1.5t2 1" stroke="#313335" stroke-width="1" fill="none"/></svg>
<svg class="r" style="left:1010px;top:502px;" width="11" height="11" viewBox="0 0 11 11"><rect x="1.5" y="1.5" width="8" height="8" fill="#313335" stroke="#7a7d80" stroke-width="1"/><path d="M3.5 5.5h4M5.5 3.5v4" stroke="#7a7d80"/></svg>
<div class="cl" style="left:1021px;top:497.5px;width:874px"><span class="d">    </span><span class="k">public void </span><span class="m">deleteStudent</span><span class="d">(</span><span class="a">@PathVariable</span><span class="d">(</span><span class="q">&quot;</span><span class="su">studentId</span><span class="q">&quot;</span><span class="d">) Long studentId)</span><span class="fd"> { </span><span class="f">studentService</span><span class="d">.deleteStudent(studentId)</span><span class="k">;</span><span class="fd"> }</span></div>
<div class="ln" style="left:957px;top:520.5px;width:20px;color:#56595c">33</div>
<div class="ln" style="left:957px;top:542.5px;width:20px;color:#56595c">34</div>
<div class="cl" style="left:1021px;top:541.5px;width:874px"><span class="d">    </span><span class="a">@PutMapping</span><span class="d">(path = </span><span class="gl"><svg width="21" height="22" viewBox="0 0 21 22"><rect x="0" y="3" width="23" height="15" rx="2" fill="#2f2f2f"/><circle cx="8" cy="10.5" r="5.1" fill="#8d9093"/><path d="M5.2 9.2q2-2.8 5.4-1.6l-0.6 2.2q-2.4-0.8-4.8-0.6z" fill="#3a3d40"/><path d="M3.6 11.5l2.6 1.2l1.2 2.4l-1.6 0.3q-1.8-1.4-2.2-3.9z" fill="#3a3d40"/><path d="M10.2 11l2.6-0.4q0 2-1.4 3.4z" fill="#3a3d40"/><path d="M15 8.8l3.2 3.2l3.2-3.2" stroke="#8a8d90" stroke-width="1.7" fill="none"/></svg></span><span class="q">&quot;</span><span class="su">{studentId}</span><span class="q">&quot;</span><span class="d">)</span></div>
<div class="ln" style="left:957px;top:564.5px;width:20px;color:#56595c">35</div>
<svg class="r" style="left:982px;top:566px;" width="17" height="17" viewBox="0 0 17 17"><circle cx="8" cy="8" r="6.8" fill="#4e9a45"/><path d="M2.5 4.5q5 4 11 8" stroke="#2b5e2a" stroke-width="1.4" fill="none"/><circle cx="11.5" cy="11.5" r="4.2" fill="#a9acae" stroke="#313335" stroke-width="1"/><path d="M9.5 10q1.5 0 2 1.5t2 1" stroke="#313335" stroke-width="1" fill="none"/></svg>
<div class="cl" style="left:1021px;top:563.5px;width:874px"><span class="d">    </span><span class="k">public void </span><span class="m">updateStudent</span><span class="d">(</span></div>
<div class="ln" style="left:957px;top:586.5px;width:20px;color:#56595c">36</div>
<div class="cl" style="left:1021px;top:585.5px;width:874px"><span class="d">            </span><span class="a">@PathVariable</span><span class="d">(</span><span class="s">&quot;studentId&quot;</span><span class="d">) Long studentId</span><span class="k">,</span></div>
<div class="r" style="left:1887px;top:189px;width:9px;height:272px;background:#4d4d4d;border-radius:1px"></div>
<div class="r" style="left:1023px;top:593px;width:761px;height:8px;background:rgba(100,100,100,0.6);border-radius:3px"></div>
<div class="r" style="left:1883px;top:336px;width:12px;height:2px;background:#447152;"></div>
</div>
<div class="t" style="left:886.0px;top:91.2px;font-size:12.00px;color:#c9c9c9;transform-origin:0 50%;transform:scaleX(0.9673);">Analyzing...</div>
<svg class="r" style="left:1874px;top:92px;" width="14" height="14" viewBox="0 0 14 14"><path d="M2 7l3.5 3.5l7-7" stroke="#59a869" stroke-width="2.4" fill="none"/></svg>
<div class="r" style="left:1170px;top:367px;width:2px;height:17px;background:#bbbbbb;"></div>
<div class="r" style="left:18px;top:603px;width:1877px;height:26px;background:#3c3f41;"></div>
<div class="r" style="left:18px;top:603px;width:1877px;height:1px;background:#323232;"></div>
<div class="t" style="left:24.0px;top:606.7px;font-size:12.00px;color:#bbbbbb;transform-origin:0 50%;transform:scaleX(0.9074);">Run:</div>
<svg class="r" style="left:66px;top:607px;" width="20" height="18" viewBox="0 0 20 18"><path d="M1 9q1-6 8-7q4 0 6-1q-1 5-3 7q-3 4-8 3z" fill="#59a869"/><circle cx="11" cy="11" r="4.2" fill="#3c3f41" stroke="#aeb0b2" stroke-width="1.2"/><circle cx="13" cy="14" r="2.2" fill="#4dc64d"/></svg>
<div class="t" style="left:87.0px;top:606.7px;font-size:12.00px;color:#bbbbbb;transform-origin:0 50%;transform:scaleX(1.0119);">AmigosCodeSpringBootApplication</div>
<svg class="r" style="left:282px;top:612px;" width="10" height="10" viewBox="0 0 10 10"><path d="M1.5 1.5l7 7M8.5 1.5l-7 7" stroke="#54575a" stroke-width="1.2"/></svg>
<div class="r" style="left:55px;top:627px;width:247px;height:3px;background:#787c80;"></div>
<div class="r" style="left:18px;top:629px;width:1877px;height:1px;background:#323232;"></div>
<svg class="r" style="left:1847px;top:607px;" width="18" height="18" viewBox="0 0 18 18"><circle cx="9" cy="9" r="5" fill="#aeb0b2"/><path d="M9 2v14M2 9h14M4 4l10 10M14 4l-10 10" stroke="#aeb0b2" stroke-width="2.2"/><circle cx="9" cy="9" r="2" fill="#3c3f41"/></svg>
<div class="r" style="left:1876px;top:615px;width:12px;height:2px;background:#aeb0b2;"></div>
<div class="r" style="left:47px;top:630px;width:1848px;height:27px;background:#3c3f41;"></div>
<div class="t" style="left:60.0px;top:633.7px;font-size:12.00px;color:#bbbbbb;transform-origin:0 50%;transform:scaleX(0.9540);">Console</div>
<div class="r" style="left:47px;top:655px;width:68px;height:3px;background:#747a80;"></div>
<svg class="r" style="left:124px;top:634px;" width="18" height="18" viewBox="0 0 18 18"><circle cx="9" cy="4" r="2.5" fill="#e0733b"/><circle cx="4" cy="14" r="2.5" fill="#e0733b"/><circle cx="14" cy="14" r="2.5" fill="#e0733b"/><path d="M9 4l-5 10M9 4l5 10" stroke="#e0733b" stroke-width="1.4"/></svg>
<div class="t" style="left:146.0px;top:633.7px;font-size:12.00px;color:#bbbbbb;transform-origin:0 50%;transform:scaleX(0.9846);">Actuator</div>
<div class="r" style="left:17px;top:630px;width:29px;height:370px;background:#3c3f41;"></div>
<div class="r" style="left:46px;top:657px;width:29px;height:343px;background:#3c3f41;"></div>
<div class="r" style="left:46px;top:630px;width:1px;height:370px;background:#323232;"></div>
<div class="r" style="left:75px;top:657px;width:1px;height:343px;background:#323232;"></div>
<svg class="r" style="left:23px;top:635px;" width="18" height="18" viewBox="0 0 18 18"><path d="M13.5 5.5A6 6 0 1 0 8 15" stroke="#59a869" stroke-width="2.3" fill="none"/><path d="M10 1l5 4.5l-5.5 2z" fill="#59a869"/><rect x="10" y="10" width="6" height="6" fill="#aeb0b2"/></svg>
<svg class="r" style="left:23px;top:661px;" width="18" height="18" viewBox="0 0 18 18"><path d="M3 15l7-7" stroke="#aeb0b2" stroke-width="3"/><path d="M9 9a4.5 4.5 0 1 1 6-6l-3 3l1 1l3-3a4.5 4.5 0 0 1-6 6z" fill="#aeb0b2"/></svg>
<div class="r" style="left:24px;top:686px;width:18px;height:1px;background:#4a4d50;"></div>
<div class="r" style="left:26px;top:697px;width:11px;height:11px;background:#db5c5c;"></div>
<svg class="r" style="left:23px;top:720px;" width="18" height="18" viewBox="0 0 18 18"><path d="M2 5h3l1.5-2h5L13 5h3v10H2z" fill="#aeb0b2"/><circle cx="9" cy="10" r="3" fill="#3c3f41"/><circle cx="9" cy="10" r="1.8" fill="#aeb0b2"/></svg>
<svg class="r" style="left:23px;top:746px;" width="18" height="18" viewBox="0 0 18 18"><ellipse cx="8" cy="10" rx="4" ry="5" fill="#59a869"/><path d="M2 6l3 2M14 6l-3 2M1.5 10h3M2.5 15l3-2M6 3l1 2M10 3l-1 2" stroke="#59a869" stroke-width="1.4"/><path d="M10 16l6-6M12 10h4v4" stroke="#aeb0b2" stroke-width="1.5" fill="none"/></svg>
<svg class="r" style="left:23px;top:772px;" width="18" height="18" viewBox="0 0 18 18"><path d="M5 2h10v14H5v-4" stroke="#aeb0b2" stroke-width="1.6" fill="none"/><path d="M1 9h9M7 6l3 3l-3 3" stroke="#db5c5c" stroke-width="1.8" fill="none"/></svg>
<div class="r" style="left:24px;top:798px;width:18px;height:1px;background:#4a4d50;"></div>
<svg class="r" style="left:23px;top:805px;" width="18" height="16" viewBox="0 0 18 16"><rect x="2" y="3" width="6" height="4" fill="#aeb0b2"/><rect x="9" y="3" width="6" height="4" fill="#aeb0b2"/><rect x="2" y="9" width="13" height="3" fill="#aeb0b2"/></svg>
<div class="r" style="left:24px;top:829px;width:18px;height:1px;background:#4a4d50;"></div>
<svg class="r" style="left:23px;top:837px;" width="18" height="18" viewBox="0 0 18 18"><path d="M3 16l5-5" stroke="#aeb0b2" stroke-width="1.6"/><path d="M7 7l4-4l4 4l-4 4zM5.5 9.5l3 3" stroke="#aeb0b2" stroke-width="2.2" fill="#aeb0b2"/></svg>
<svg class="r" style="left:52px;top:663px;" width="18" height="18" viewBox="0 0 18 18"><path d="M9 3v13M4 8l5-5l5 5" stroke="#aeb0b2" stroke-width="1.8" fill="none"/></svg>
<svg class="r" style="left:52px;top:689px;" width="18" height="18" viewBox="0 0 18 18"><path d="M9 2v13M4 10l5 5l5-5" stroke="#aeb0b2" stroke-width="1.8" fill="none"/></svg>
<svg class="r" style="left:52px;top:716px;" width="18" height="18" viewBox="0 0 18 18"><path d="M2 4h13M2 9h11q3 0 3 3t-3 3H9M11 13l-2 2l2 2M2 14h4" stroke="#aeb0b2" stroke-width="1.6" fill="none"/></svg>
<div class="r" style="left:50px;top:740px;width:22px;height:22px;background:#4c5052;border-radius:3px"></div>
<svg class="r" style="left:52px;top:742px;" width="18" height="18" viewBox="0 0 18 18"><path d="M2 5h6M2 9h6M2 14h14M12 2v9M9 8l3 3l3-3" stroke="#aeb0b2" stroke-width="1.6" fill="none"/></svg>
<svg class="r" style="left:52px;top:768px;" width="18" height="18" viewBox="0 0 18 18"><rect x="4" y="2" width="10" height="4" fill="#aeb0b2"/><rect x="1" y="7" width="16" height="6" rx="1" fill="#aeb0b2"/><rect x="4" y="11" width="10" height="5" fill="#aeb0b2" stroke="#3c3f41"/></svg>
<svg class="r" style="left:52px;top:794px;" width="18" height="18" viewBox="0 0 18 18"><path d="M2 4h14M6 4V2h6v2" stroke="#aeb0b2" stroke-width="1.6" fill="none"/><path d="M4 6h10l-1 10H5z" fill="#aeb0b2"/></svg>
<div class="r" style="left:0;top:0;width:1919px;height:1040px;clip-path:inset(657px 24px 40px 76px)">
<div class="r" style="left:76px;top:657px;width:1819px;height:343px;background:#2b2b2b;"></div>
<div class="cl" style="left:88px;top:656.5px;width:1807px"><span class="cd">2022-02-14 21:00:47.344  </span><span class="ci">INFO</span> <span class="cp">23468</span><span class="cd"> --- [           main] </span><span class="cg">c.e.a.AmigosCodeSpringBootApplication   </span><span class="cd"> : Starting AmigosCodeSpringBootApplication using Java 11.0.12 on DESKTOP-86B7ML7 with PID 23468 (</span><span class="ck">C:\Users\mlubar\Desktop\Projects\SpringBoot</span></div>
<div class="cl" style="left:88px;top:678.5px;width:1807px"><span class="cd">2022-02-14 21:00:47.348  </span><span class="ci">INFO</span> <span class="cp">23468</span><span class="cd"> --- [           main] </span><span class="cg">c.e.a.AmigosCodeSpringBootApplication   </span><span class="cd"> : No active profile set, falling back to default profiles: default</span></div>
<div class="cl" style="left:88px;top:700.5px;width:1807px"><span class="cd">2022-02-14 21:00:47.793  </span><span class="ci">INFO</span> <span class="cp">23468</span><span class="cd"> --- [           main] </span><span class="cg">.s.d.r.c.RepositoryConfigurationDelegate</span><span class="cd"> : Bootstrapping Spring Data JPA repositories in DEFAULT mode.</span></div>
<div class="cl" style="left:88px;top:722.5px;width:1807px"><span class="cd">2022-02-14 21:00:47.838  </span><span class="ci">INFO</span> <span class="cp">23468</span><span class="cd"> --- [           main] </span><span class="cg">.s.d.r.c.RepositoryConfigurationDelegate</span><span class="cd"> : Finished Spring Data repository scanning in 40 ms. Found 1 JPA repository interfaces.</span></div>
<div class="cl" style="left:88px;top:744.5px;width:1807px"><span class="cd">2022-02-14 21:00:48.114  </span><span class="ci">INFO</span> <span class="cp">23468</span><span class="cd"> --- [           main] </span><span class="cg">o.s.b.w.embedded.tomcat.TomcatWebServer </span><span class="cd"> : Tomcat initialized with port(s): 8080 (http)</span></div>
<div class="cl" style="left:88px;top:766.5px;width:1807px"><span class="cd">2022-02-14 21:00:48.119  </span><span class="ci">INFO</span> <span class="cp">23468</span><span class="cd"> --- [           main] </span><span class="cg">o.apache.catalina.core.StandardService  </span><span class="cd"> : Starting service [Tomcat]</span></div>
<div class="cl" style="left:88px;top:788.5px;width:1807px"><span class="cd">2022-02-14 21:00:48.120  </span><span class="ci">INFO</span> <span class="cp">23468</span><span class="cd"> --- [           main] </span><span class="cg">org.apache.catalina.core.StandardEngine </span><span class="cd"> : Starting Servlet engine: [Apache Tomcat/9.0.54]</span></div>
<div class="cl" style="left:88px;top:810.5px;width:1807px"><span class="cd">2022-02-14 21:00:48.179  </span><span class="ci">INFO</span> <span class="cp">23468</span><span class="cd"> --- [           main] </span><span class="cg">o.a.c.c.C.[Tomcat].[localhost].[/]      </span><span class="cd"> : Initializing Spring embedded WebApplicationContext</span></div>
<div class="cl" style="left:88px;top:832.5px;width:1807px"><span class="cd">2022-02-14 21:00:48.180  </span><span class="ci">INFO</span> <span class="cp">23468</span><span class="cd"> --- [           main] </span><span class="cg">w.s.c.ServletWebServerApplicationContext</span><span class="cd"> : Root WebApplicationContext: initialization completed in 772 ms</span></div>
<div class="cl" style="left:88px;top:854.5px;width:1807px"><span class="cd">2022-02-14 21:00:48.303  </span><span class="ci">INFO</span> <span class="cp">23468</span><span class="cd"> --- [           main] </span><span class="cg">o.hibernate.jpa.internal.util.LogHelper </span><span class="cd"> : HHH000204: Processing PersistenceUnitInfo [name: default]</span></div>
<div class="cl" style="left:88px;top:876.5px;width:1807px"><span class="cd">2022-02-14 21:00:48.326  </span><span class="ci">INFO</span> <span class="cp">23468</span><span class="cd"> --- [           main] </span><span class="cg">org.hibernate.Version                   </span><span class="cd"> : HHH000412: Hibernate ORM core version 5.4.32.Final</span></div>
<div class="cl" style="left:88px;top:898.5px;width:1807px"><span class="cd">2022-02-14 21:00:48.391  </span><span class="ci">INFO</span> <span class="cp">23468</span><span class="cd"> --- [           main] </span><span class="cg">o.hibernate.annotations.common.Version  </span><span class="cd"> : HCANN000001: Hibernate Commons Annotations {5.1.2.Final}</span></div>
<div class="cl" style="left:88px;top:920.5px;width:1807px"><span class="cd">2022-02-14 21:00:48.447  </span><span class="ci">INFO</span> <span class="cp">23468</span><span class="cd"> --- [           main] </span><span class="cg">com.zaxxer.hikari.HikariDataSource      </span><span class="cd"> : HikariPool-1 - Starting...</span></div>
<div class="cl" style="left:88px;top:942.5px;width:1807px"><span class="cd">2022-02-14 21:00:48.656  </span><span class="ci">INFO</span> <span class="cp">23468</span><span class="cd"> --- [           main] </span><span class="cg">com.zaxxer.hikari.HikariDataSource      </span><span class="cd"> : HikariPool-1 - Start completed.</span></div>
<div class="cl" style="left:88px;top:964.5px;width:1807px"><span class="cd">2022-02-14 21:00:48.665  </span><span class="ci">INFO</span> <span class="cp">23468</span><span class="cd"> --- [           main] </span><span class="cg">org.hibernate.dialect.Dialect           </span><span class="cd"> : HHH000400: Using dialect: org.hibernate.dialect.PostgreSQLDialect</span></div>
<div class="cl" style="left:88px;top:986.5px;width:1807px"><span class="cd">Hibernate:</span></div>
<div class="r" style="left:88px;top:990px;width:1177px;height:8px;background:rgba(95,95,95,0.6);border-radius:3px"></div>
<div class="r" style="left:1886px;top:706px;width:8px;height:72px;background:#4a4a4a;border-radius:3px"></div>
</div>
<div class="r" style="left:0px;top:1000px;width:1919px;height:22px;background:#3c3f41;"></div>
<div class="r" style="left:0px;top:1000px;width:1919px;height:1px;background:#323232;"></div>
<div class="r" style="left:67px;top:1001px;width:55px;height:20px;background:#2d2f30;"></div>
<svg class="r" style="left:24px;top:1003px;" width="16" height="16" viewBox="0 0 16 16"><path d="M5 2v12M5 12q0-4 6-5V2" stroke="#aeb0b2" stroke-width="1.8" fill="none"/><circle cx="5" cy="14" r="1.8" fill="#aeb0b2"/></svg>
<div class="t" style="left:43.0px;top:1001.7px;font-size:12.00px;color:#bbbbbb;transform-origin:0 50%;transform:scaleX(0.9782);">Git</div>
<svg class="r" style="left:74px;top:1003px;" width="16" height="16" viewBox="0 0 16 16"><path d="M3 2l10 6l-10 6z" fill="#aeb0b2"/><circle cx="12" cy="13" r="2.5" fill="#3fb83f"/></svg>
<div class="t" style="left:93.0px;top:1001.7px;font-size:12.00px;color:#dddddd;transform-origin:0 50%;transform:scaleX(0.9540);">Run</div>
<svg class="r" style="left:133px;top:1003px;" width="16" height="16" viewBox="0 0 16 16"><path d="M2 4h2M6 4h9M2 8h2M6 8h9M2 12h2M6 12h9" stroke="#aeb0b2" stroke-width="1.8"/></svg>
<div class="t" style="left:150.0px;top:1001.7px;font-size:12.00px;color:#bbbbbb;transform-origin:0 50%;transform:scaleX(0.9290);">TODO</div>
<svg class="r" style="left:201px;top:1003px;" width="16" height="16" viewBox="0 0 16 16"><circle cx="8" cy="8" r="6.5" fill="#aeb0b2"/><path d="M8 4v5M8 10.5v1.5" stroke="#3c3f41" stroke-width="1.8"/></svg>
<div class="t" style="left:219.0px;top:1001.7px;font-size:12.00px;color:#bbbbbb;transform-origin:0 50%;transform:scaleX(0.9274);">Problems</div>
<svg class="r" style="left:284px;top:1003px;" width="16" height="16" viewBox="0 0 16 16"><circle cx="7" cy="8" r="5.5" stroke="#aeb0b2" stroke-width="1.6" fill="none"/><path d="M9 8l6 4l-6 4z" fill="#aeb0b2"/></svg>
<div class="t" style="left:303.0px;top:1001.7px;font-size:12.00px;color:#bbbbbb;transform-origin:0 50%;transform:scaleX(0.9735);">Profiler</div>
<svg class="r" style="left:359px;top:1003px;" width="16" height="16" viewBox="0 0 16 16"><rect x="1" y="2" width="14" height="12" fill="#aeb0b2"/><path d="M3 5l3 2.5l-3 2.5M7 11h4" stroke="#3c3f41" stroke-width="1.5" fill="none"/></svg>
<div class="t" style="left:377.0px;top:1001.7px;font-size:12.00px;color:#bbbbbb;transform-origin:0 50%;transform:scaleX(0.9924);">Terminal</div>
<svg class="r" style="left:441px;top:1003px;" width="16" height="16" viewBox="0 0 16 16"><path d="M2 4l4-3l4 3l-2 2l-1.5-1l-4 8l-1.5-1l4-8z" fill="#aeb0b2"/><path d="M8 7l6 8" stroke="#aeb0b2" stroke-width="2"/></svg>
<div class="t" style="left:459.0px;top:1001.7px;font-size:12.00px;color:#bbbbbb;transform-origin:0 50%;transform:scaleX(0.9369);">Build</div>
<svg class="r" style="left:503px;top:1003px;" width="16" height="16" viewBox="0 0 16 16"><path d="M8 1l6.5 3.5v7L8 15l-6.5-3.5v-7z" fill="#aeb0b2"/><path d="M6 5l5 3l-5 3z" fill="#3c3f41"/></svg>
<div class="t" style="left:522.0px;top:1001.7px;font-size:12.00px;color:#bbbbbb;transform-origin:0 50%;transform:scaleX(0.8693);">Services</div>
<svg class="r" style="left:580px;top:1003px;" width="16" height="16" viewBox="0 0 16 16"><circle cx="10" cy="3" r="2.2" fill="#aeb0b2"/><circle cx="4" cy="13" r="2.2" fill="#aeb0b2"/><circle cx="12" cy="13" r="2.2" fill="#aeb0b2"/><path d="M10 3l-6 10M10 3l2 10" stroke="#aeb0b2" stroke-width="1.5"/></svg>
<div class="t" style="left:599.0px;top:1001.7px;font-size:12.00px;color:#bbbbbb;transform-origin:0 50%;transform:scaleX(0.9931);">Endpoints</div>
<svg class="r" style="left:673px;top:1003px;" width="16" height="16" viewBox="0 0 16 16"><path d="M8 1l7 3.5l-7 3.5l-7-3.5z" fill="#aeb0b2"/><path d="M1 8l7 3.5l7-3.5M1 11.5l7 3.5l7-3.5" stroke="#aeb0b2" stroke-width="1.4" fill="none"/></svg>
<div class="t" style="left:692.0px;top:1001.7px;font-size:12.00px;color:#bbbbbb;transform-origin:0 50%;transform:scaleX(0.9515);">Dependencies</div>
<svg class="r" style="left:786px;top:1003px;" width="16" height="16" viewBox="0 0 16 16"><path d="M2 13q0-9 12-11q0 10-9 11z" fill="#aeb0b2"/><path d="M3 13q3-5 8-8" stroke="#3c3f41" stroke-width="1"/></svg>
<div class="t" style="left:805.0px;top:1001.7px;font-size:12.00px;color:#bbbbbb;transform-origin:0 50%;transform:scaleX(0.9802);">Spring</div>
<svg class="r" style="left:1816px;top:1004px;" width="16" height="16" viewBox="0 0 16 16"><circle cx="8" cy="8" r="7" fill="#3e9b4f"/><text x="8" y="12" font-family="Liberation Sans" font-size="10" fill="#fff" text-anchor="middle" font-weight="bold">2</text></svg>
<div class="t" style="left:1835.0px;top:1002.2px;font-size:12.00px;color:#bbbbbb;transform-origin:0 50%;transform:scaleX(0.9068);">Event Log</div>
<div class="r" style="left:0px;top:1022px;width:1919px;height:18px;background:#3c3f41;"></div>
<div class="r" style="left:0px;top:1021px;width:1919px;height:1px;background:#48494c;"></div>
<svg class="r" style="left:2px;top:1024px;" width="14" height="14" viewBox="0 0 14 14"><rect x="3.5" y="1.5" width="9" height="9" fill="none" stroke="#aeb0b2"/><path d="M1.5 4v8.5H10" stroke="#aeb0b2" fill="none"/></svg>
<div class="t" style="left:23.0px;top:1021.7px;font-size:12.00px;color:#bbbbbb;transform-origin:0 50%;transform:scaleX(0.9791);">Build completed successfully in 3 sec, 959 ms (a minute ago)</div>
<div class="t" style="left:1628.0px;top:1021.7px;font-size:12.00px;color:#bbbbbb;transform-origin:0 50%;transform:scaleX(0.8992);">24:17</div>
<div class="t" style="left:1667.0px;top:1021.7px;font-size:12.00px;color:#bbbbbb;transform-origin:0 50%;transform:scaleX(0.8297);">CRLF</div>
<div class="t" style="left:1706.0px;top:1021.7px;font-size:12.00px;color:#bbbbbb;transform-origin:0 50%;transform:scaleX(0.8972);">UTF-8</div>
<div class="t" style="left:1748.6px;top:1021.7px;font-size:12.00px;color:#bbbbbb;transform-origin:0 50%;transform:scaleX(0.9037);">4 spaces</div>
<svg class="r" style="left:1803px;top:1023px;" width="14" height="16" viewBox="0 0 14 16"><path d="M4 2v12M4 12q0-4 6-5V2" stroke="#aeb0b2" stroke-width="1.6" fill="none"/></svg>
<div class="t" style="left:1822.0px;top:1021.7px;font-size:12.00px;color:#bbbbbb;transform-origin:0 50%;transform:scaleX(0.9708);">master</div>
<svg class="r" style="left:1866px;top:1023px;" width="16" height="16" viewBox="0 0 16 16"><rect x="1" y="8" width="9" height="7" fill="#aeb0b2"/><path d="M8 8V4.5a3 3 0 0 1 6 0V6" stroke="#aeb0b2" stroke-width="1.6" fill="none"/></svg>
<svg class="r" style="left:1889px;top:1023px;" width="18" height="17" viewBox="0 0 18 17"><path d="M2 10q-1-5 4-5q1-4 6-3q4 1 3 5q3 1 2 4H3z" fill="#aeb0b2"/><circle cx="13" cy="13" r="3" fill="#aeb0b2" stroke="#3c3f41"/></svg></body></html>
